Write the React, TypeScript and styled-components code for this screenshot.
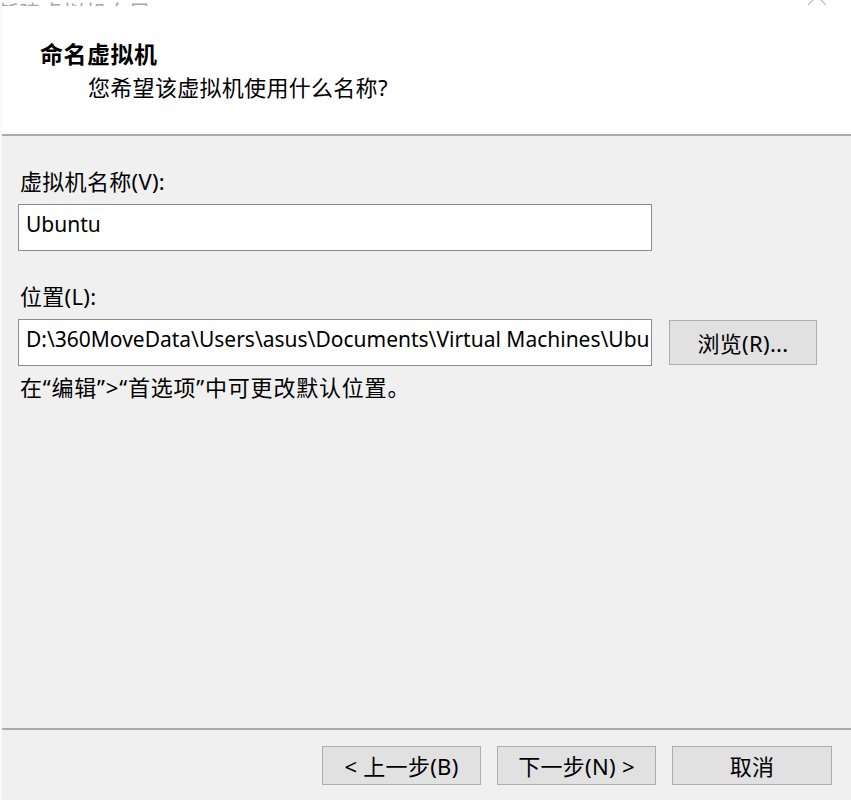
import React from "react";
import styled, { createGlobalStyle } from "styled-components";

const GlobalStyle = createGlobalStyle`
  html, body {
    margin: 0;
    padding: 0;
    background: #f0f0f0;
  }
  body {
    font-family: "Noto Sans", "Noto Sans CJK SC", sans-serif;
    color: #000;
  }
`;

const Window = styled.div`
  width: 851px;
  height: 800px;
  box-sizing: border-box;
  border-left: 2px solid #fafafa;
  display: flex;
  flex-direction: column;
  background: #f0f0f0;
  overflow: hidden;
`;

const Header = styled.div`
  background: #ffffff;
  height: 134px;
  display: flex;
  flex-direction: column;
  margin-left: -2px;
`;

const TitleStrip = styled.div`
  height: 6px;
  overflow: hidden;
  display: flex;
  justify-content: space-between;
  align-items: flex-end;
  padding-right: 24px;
`;

const TitleText = styled.div`
  font-family: "Noto Sans CJK SC", sans-serif;
  font-size: 22px;
  line-height: 22px;
  color: #a8a8a8;
  margin-left: -3px;
  margin-bottom: -16px;
  white-space: nowrap;
`;

const CloseGlyph = styled.svg`
  width: 20px;
  height: 20px;
  flex: none;
`;

const Heading = styled.div`
  font-family: "Noto Sans CJK SC", sans-serif;
  font-weight: 700;
  font-size: 23px;
  line-height: 28px;
  margin: 33px 0 0 40px;
  letter-spacing: 0.5px;
`;

const Subtitle = styled.div`
  font-size: 22px;
  line-height: 28px;
  margin: 6px 0 0 88px;
  letter-spacing: 0.3px;
`;

const Rule = styled.div`
  height: 2px;
  background: #ababab;
  flex: none;
`;

const Body = styled.div`
  flex: 1;
  padding: 31px 0 0 16px;
  display: flex;
  flex-direction: column;
`;

const Label = styled.div<{ $gap?: number }>`
  font-size: 22px;
  line-height: 28px;
  margin-top: ${(p) => p.$gap ?? 0}px;
  padding-left: 2px;
  letter-spacing: 0.3px;
`;

const FieldRow = styled.div<{ $gap?: number }>`
  display: flex;
  align-items: center;
  gap: 17px;
  margin-top: ${(p) => p.$gap ?? 0}px;
`;

const Field = styled.div`
  width: 634px;
  height: 47px;
  box-sizing: border-box;
  border: 1px solid #8c8c8c;
  background: #ffffff;
  padding: 5px 0 0 7px;
  font-size: 21px;
  line-height: 28px;
  white-space: nowrap;
  overflow: hidden;
`;

const Button = styled.div<{ $w: number; $h: number }>`
  width: ${(p) => p.$w}px;
  height: ${(p) => p.$h}px;
  box-sizing: border-box;
  border: 1px solid #adadad;
  background: #e1e1e1;
  display: flex;
  align-items: center;
  justify-content: center;
  font-size: 22px;
  line-height: 28px;
  white-space: nowrap;
  flex: none;
  letter-spacing: 0.3px;
`;

const Hint = styled.div`
  font-size: 22px;
  line-height: 28px;
  margin-top: 7px;
  padding-left: 2px;
  letter-spacing: 0.8px;
`;

const Footer = styled.div`
  height: 70px;
  display: flex;
  justify-content: flex-end;
  align-items: flex-start;
  gap: 16px;
  padding: 16px 19px 0 0;
  box-sizing: border-box;
  flex: none;
`;

export default function App() {
  return (
    <>
      <GlobalStyle />
      <Window>
        <Header>
          <TitleStrip>
            <TitleText>新建虚拟机向导</TitleText>
            <CloseGlyph viewBox="0 0 20 20">
              <path d="M1 1 L19 19 M19 1 L1 19" stroke="#c4c4c4" strokeWidth="1.4" />
            </CloseGlyph>
          </TitleStrip>
          <Heading>命名虚拟机</Heading>
          <Subtitle>您希望该虚拟机使用什么名称?</Subtitle>
        </Header>
        <Rule />
        <Body>
          <Label>虚拟机名称(V):</Label>
          <FieldRow $gap={9}>
            <Field>Ubuntu</Field>
          </FieldRow>
          <Label $gap={31}>位置(L):</Label>
          <FieldRow $gap={9}>
            <Field>D:\360MoveData\Users\asus\Documents\Virtual Machines\Ubuntu</Field>
            <Button $w={148} $h={45}>浏览(R)...</Button>
          </FieldRow>
          <Hint>在“编辑”&gt;“首选项”中可更改默认位置。</Hint>
        </Body>
        <Rule />
        <Footer>
          <Button $w={159} $h={39}>&lt; 上一步(B)</Button>
          <Button $w={159} $h={39}>下一步(N) &gt;</Button>
          <Button $w={160} $h={39}>取消</Button>
        </Footer>
      </Window>
    </>
  );
}
